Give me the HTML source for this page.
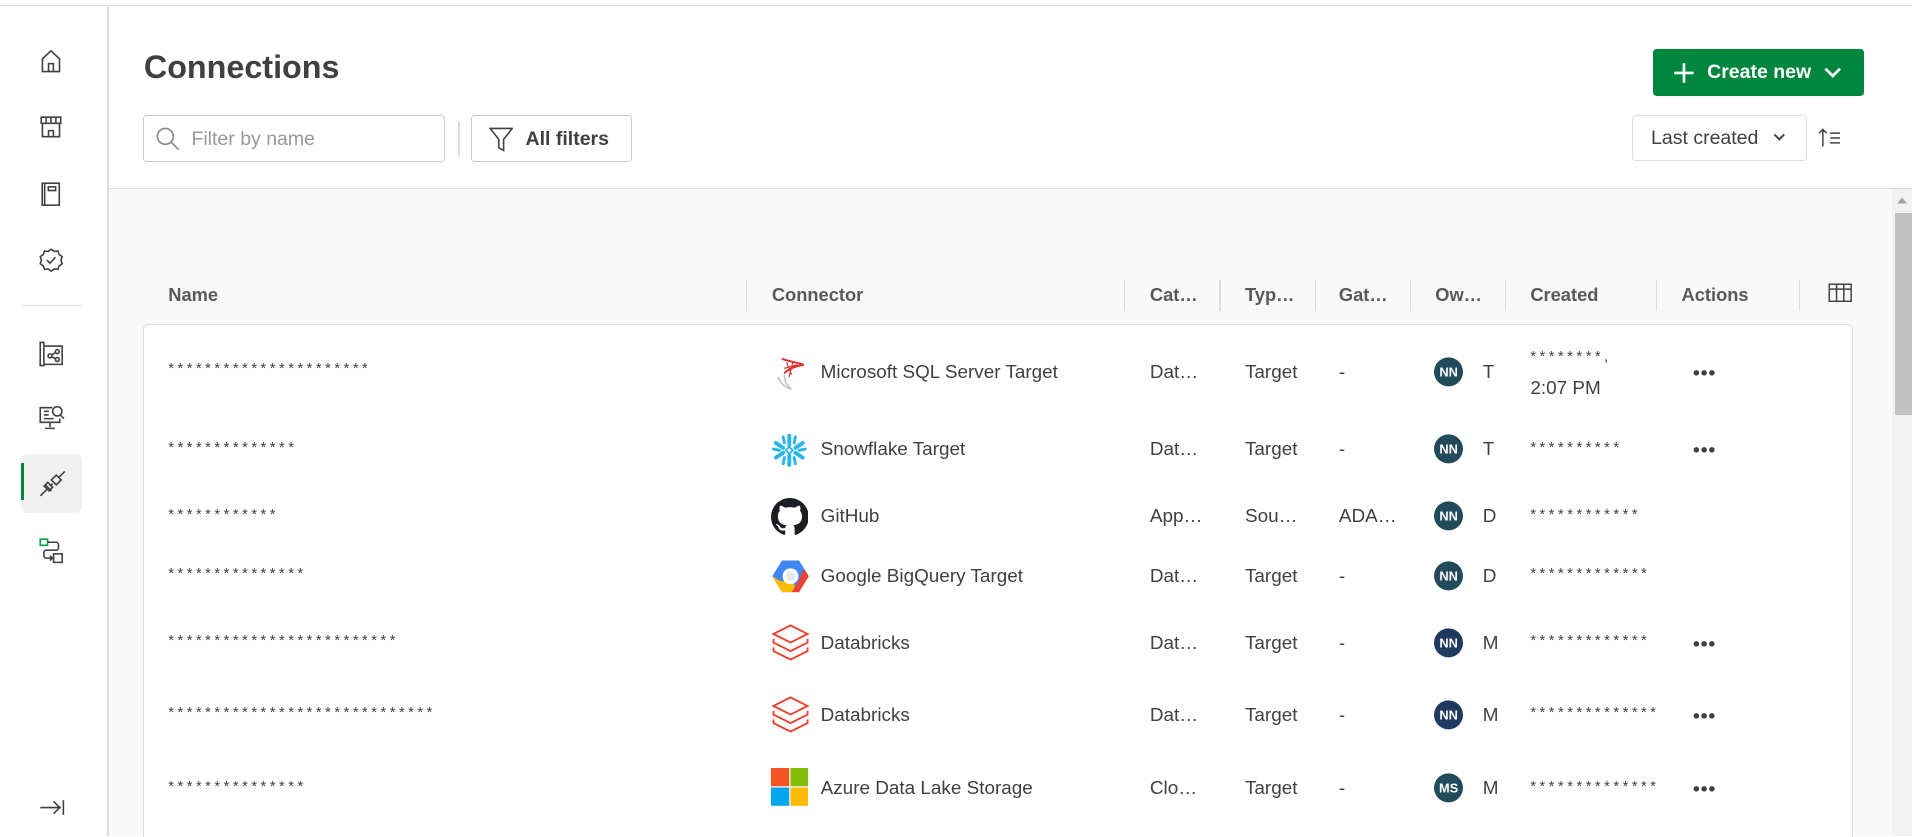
<!DOCTYPE html>
<html><head><meta charset="utf-8"><style>
*{box-sizing:border-box;margin:0;padding:0}
html,body{width:1912px;height:837px;overflow:hidden;background:#fff}
#w{position:relative;width:1568px;height:686px;zoom:1.21939;font-family:"Liberation Sans",sans-serif;color:#404040;overflow:hidden}
.a{position:absolute}
.t{position:absolute;font-size:15.5px;color:#404040;white-space:nowrap;transform:translateY(-50%)}
.h{position:absolute;top:242px;transform:translateY(-50%);font-size:15px;font-weight:bold;color:#595959;white-space:nowrap}
.sep{position:absolute;top:230px;width:1px;height:25px;background:#ddd}
.av{position:absolute;width:24px;height:24px;border-radius:50%;background:#234a5a;color:#fff;font-size:10.5px;font-weight:bold;text-align:center;line-height:24px;transform:translateY(-50%)}
.dots{position:absolute;transform:translateY(-50%);font-size:10.5px;font-weight:bold;color:#404040;letter-spacing:0px}
.st{font-size:12px;letter-spacing:2.9px}
svg.i{position:absolute}
</style></head><body><div id="w">
<div class="a" style="left:0;top:4px;width:1568px;height:1px;background:#ddd"></div>
<div class="a" style="left:88px;top:5px;width:1px;height:681px;background:#ddd"></div>
<svg class="i" style="left:33px;top:40px" width="18" height="20" viewBox="0 0 18 20" fill="none" stroke="#404040" stroke-width="1.3"><path d="M2 8L9 1.5 16 8V18.5H2Z"/><path d="M7 18.5V12h4v6.5"/></svg>
<svg class="i" style="left:33px;top:95px" width="18" height="18" viewBox="0 0 18 18" fill="none" stroke="#404040" stroke-width="1.3"><path d="M1 1h16v5H1z M5 1v5 M9 1v5 M13 1v5"/><path d="M2 6v11h14V6"/><path d="M7 17v-5h4v5"/></svg>
<svg class="i" style="left:34px;top:149px" width="16" height="20" viewBox="0 0 16 20" fill="none" stroke="#404040" stroke-width="1.3"><rect x="1" y="1" width="14" height="18"/><path d="M3 1v18"/><rect x="6" y="4" width="6" height="3"/></svg>
<svg class="i" style="left:32px;top:203px" width="20" height="20" viewBox="0 0 20 20" fill="none" stroke="#404040" stroke-width="1.3"><path d="M10 1l2.5 1.8 3-.3 1 2.8 2.5 1.8-1 2.9 1 2.9-2.5 1.8-1 2.8-3-.3L10 19l-2.5-1.8-3 .3-1-2.8L1 12.9l1-2.9-1-2.9 2.5-1.8 1-2.8 3 .3z"/><path d="M6.5 10l2.5 2.5 4.5-5"/></svg>
<div class="a" style="left:18px;top:250px;width:49px;height:1px;background:#ddd"></div>
<svg class="i" style="left:32px;top:279px" width="20" height="22" viewBox="0 0 20 22" fill="none" stroke="#404040" stroke-width="1.3"><path d="M1 2h3v19H1z"/><path d="M4 5h15v15H4"/><circle cx="9" cy="13" r="1.6"/><circle cx="15" cy="9.5" r="1.6"/><circle cx="15" cy="16" r="1.6"/><path d="M10.5 12.3l3-2 M10.5 13.8l3 1.5"/></svg>
<svg class="i" style="left:32px;top:331px" width="22" height="22" viewBox="0 0 22 22" fill="none" stroke="#404040" stroke-width="1.3"><path d="M11 3H1v12h16v-3"/><path d="M4 6h4 M4 9h4 M4 12h8"/><path d="M9 15v4 M5 20h8"/><circle cx="15" cy="6" r="3.8"/><path d="M17.5 9l3 3"/></svg>
<div class="a" style="left:17px;top:372px;width:50px;height:49px;background:#f0f0f0;border-radius:5px"></div>
<div class="a" style="left:17px;top:380px;width:3px;height:30px;background:#00873d"></div>
<svg class="i" style="left:31px;top:385px" width="24" height="24" viewBox="0 0 24 24" fill="none" stroke="#404040" stroke-width="1.3"><path d="M2 22l5-5 M22 2l-5 5"/><path d="M6 13l5 5 M5 14l3-3 4 4-3 3z"/><path d="M11 9l4-4 4 4-4 4z"/><path d="M10 14l2-2"/></svg>
<svg class="i" style="left:32px;top:441px" width="22" height="22" viewBox="0 0 22 22" fill="none" stroke="#404040" stroke-width="1.3"><rect x="1" y="1" width="6" height="5" stroke="#00a040"/><path d="M7 3.5h7a2 2 0 0 1 2 2V8a2 2 0 0 1-2 2H6a2 2 0 0 0-2 2v2.5a2 2 0 0 0 2 2h5 M9 14.5l2 2-2 2"/><rect x="12" y="13" width="7" height="7"/></svg>
<svg class="i" style="left:32px;top:655px" width="22" height="14" viewBox="0 0 22 14" fill="none" stroke="#404040" stroke-width="1.3"><path d="M1 7h17 M12 2l5 5-5 5 M20 1v12"/></svg>
<div class="a" style="left:118px;top:40px;font-size:26.5px;font-weight:bold;color:#404040">Connections</div>
<div class="a" style="left:117px;top:94px;width:248px;height:39px;border:1px solid #ccc;border-radius:3px"></div>
<svg class="i" style="left:127px;top:103px" width="22" height="22" viewBox="0 0 22 22" fill="none" stroke="#8a8a8a" stroke-width="1.4"><circle cx="8.5" cy="8.5" r="6.5"/><path d="M13.5 13.5l6 6"/></svg>
<div class="a" style="left:157px;top:105px;font-size:16px;color:#999">Filter by name</div>
<div class="a" style="left:376px;top:99px;width:1px;height:29px;background:#ddd"></div>
<div class="a" style="left:386px;top:94px;width:132px;height:39px;border:1px solid #ccc;border-radius:3px"></div>
<svg class="i" style="left:401px;top:103px" width="20" height="22" viewBox="0 0 20 22" fill="none" stroke="#404040" stroke-width="1.3"><path d="M1 2h18l-7 9v9l-4-2v-7z"/></svg>
<div class="a" style="left:431px;top:105px;font-size:16px;font-weight:bold;color:#404040">All filters</div>
<div class="a" style="left:1356px;top:40px;width:173px;height:39px;background:#00873d;border-radius:3px"></div>
<svg class="i" style="left:1372px;top:51px" width="18" height="18" viewBox="0 0 18 18" stroke="#fff" stroke-width="2.2"><path d="M9 1v16 M1 9h16"/></svg>
<div class="a" style="left:1400px;top:50px;font-size:16px;font-weight:bold;color:#fff">Create new</div>
<svg class="i" style="left:1495px;top:53px" width="16" height="12" viewBox="0 0 16 12" fill="none" stroke="#fff" stroke-width="2.2"><path d="M2 3l6 6 6-6"/></svg>
<div class="a" style="left:1338px;top:94px;width:144px;height:38px;border:1px solid #ddd;border-radius:3px"></div>
<div class="a" style="left:1354px;top:104px;font-size:16px;color:#404040">Last created</div>
<svg class="i" style="left:1453px;top:108px" width="12" height="10" viewBox="0 0 12 10" fill="none" stroke="#404040" stroke-width="1.6"><path d="M2 2l4 4 4-4"/></svg>
<svg class="i" style="left:1491px;top:104px" width="20" height="18" viewBox="0 0 20 18" fill="none" stroke="#404040" stroke-width="1.2"><path d="M4 16V2 M1 5l3-3 3 3 M10 5h8 M10 9h8 M10 13h8"/></svg>
<div class="a" style="left:89px;top:154px;width:1479px;height:1px;background:#ddd"></div>
<div class="a" style="left:89px;top:155px;width:1463px;height:531px;background:#f9f9f9"></div>
<div class="a" style="left:1552px;top:155px;width:16px;height:531px;background:#f1f1f1"></div>
<div class="a" style="left:1554px;top:175px;width:14px;height:165px;background:#c1c1c1"></div>
<svg class="i" style="left:1555px;top:160px" width="10" height="8" viewBox="0 0 10 8"><path d="M1 7l4-5 4 5z" fill="#a3a3a3"/></svg>
<div class="h" style="left:138px">Name</div><div class="sep" style="left:612px"></div>
<div class="h" style="left:633px">Connector</div><div class="sep" style="left:922px"></div>
<div class="h" style="left:943px">Cat…</div><div class="sep" style="left:1000px"></div>
<div class="h" style="left:1021px">Typ…</div><div class="sep" style="left:1078px"></div>
<div class="h" style="left:1098px">Gat…</div><div class="sep" style="left:1156px"></div>
<div class="h" style="left:1177px">Ow…</div><div class="sep" style="left:1234px"></div>
<div class="h" style="left:1255px">Created</div><div class="sep" style="left:1358px"></div>
<div class="h" style="left:1379px">Actions</div><div class="sep" style="left:1475px"></div>
<svg class="i" style="left:1499px;top:232px" width="20" height="16" viewBox="0 0 20 16" fill="none" stroke="#404040" stroke-width="1.2"><rect x="1" y="1" width="18" height="14"/><path d="M1 5h18 M7 1v14 M13 1v14"/></svg>
<div class="a" style="left:117px;top:266px;width:1403px;height:440px;background:#fff;border:1px solid #ddd;border-radius:4px"></div>

<div class="t st" style="left:138px;top:303px">**********************</div>
<svg class="i" style="left:633px;top:291px" width="30" height="30" viewBox="0 0 30 30" fill="none"><path d="M8 3c5 2 12 3 18 5-6 1-12 3-16 7" stroke="#d9302c" stroke-width="1.6"/><path d="M12 6l4 10 M17 6l-3 12 M10 11l11-3" stroke="#d9302c" stroke-width="1"/><path d="M5 18c2 5 6 9 11 10-4-3-6-7-6-12" stroke="#b8bdc5" stroke-width="1.2"/></svg>
<div class="t" style="left:673px;top:306px">Microsoft SQL Server Target</div>
<div class="t" style="left:943px;top:306px">Dat…</div><div class="t" style="left:1021px;top:306px">Target</div><div class="t" style="left:1098px;top:306px">-</div>
<div class="av" style="left:1176px;top:305px">NN</div><div class="t" style="left:1216px;top:306px">T</div>
<div class="t st" style="left:1255px;top:293px">********,</div><div class="t" style="left:1255px;top:319px">2:07 PM</div>
<div class="dots" style="left:1388px;top:305px">●●●</div>

<div class="t st" style="left:138px;top:367px">**************</div>
<svg class="i" style="left:632px;top:354px" width="30" height="30" viewBox="0 0 30 30" fill="none" stroke="#29b5e8" stroke-width="3.2" stroke-linecap="round"><path d="M15 3v8 M15 19v8 M4 9l6 4 M26 9l-6 4 M4 21l6-4 M26 21l-6-4"/><path d="M10 4l1 5 M20 4l-1 5 M10 26l1-5 M20 26l-1-5 M2 14l5 1 M28 14l-5 1" stroke-width="2.4"/><rect x="13" y="13" width="4" height="4" stroke-width="1.5" transform="rotate(45 15 15)"/></svg>
<div class="t" style="left:673px;top:369px">Snowflake Target</div>
<div class="t" style="left:943px;top:369px">Dat…</div><div class="t" style="left:1021px;top:369px">Target</div><div class="t" style="left:1098px;top:369px">-</div>
<div class="av" style="left:1176px;top:368px">NN</div><div class="t" style="left:1216px;top:369px">T</div>
<div class="t st" style="left:1255px;top:367px">**********</div>
<div class="dots" style="left:1388px;top:368px">●●●</div>

<div class="t st" style="left:138px;top:422px">************</div>
<svg class="i" style="left:632px;top:408px" width="31" height="31" viewBox="0 0 16 16"><path fill="#1b1f23" d="M8 0C3.58 0 0 3.58 0 8c0 3.54 2.29 6.53 5.47 7.59.4.07.55-.17.55-.38 0-.19-.01-.82-.01-1.49-2.01.37-2.53-.49-2.69-.94-.09-.23-.48-.94-.82-1.13-.28-.15-.68-.52-.01-.53.63-.01 1.08.58 1.23.82.72 1.21 1.87.87 2.33.66.07-.52.28-.87.51-1.07-1.78-.2-3.64-.89-3.64-3.95 0-.87.31-1.59.82-2.15-.08-.2-.36-1.02.08-2.12 0 0 .67-.21 2.2.82.64-.18 1.32-.27 2-.27.68 0 1.36.09 2 .27 1.53-1.04 2.2-.82 2.2-.82.44 1.1.16 1.92.08 2.12.51.56.82 1.27.82 2.15 0 3.07-1.87 3.75-3.65 3.95.29.25.54.73.54 1.48 0 1.07-.01 1.93-.01 2.2 0 .21.15.46.55.38A8.013 8.013 0 0 0 16 8c0-4.42-3.58-8-8-8z"/></svg>
<div class="t" style="left:673px;top:424px">GitHub</div>
<div class="t" style="left:943px;top:424px">App…</div><div class="t" style="left:1021px;top:424px">Sou…</div><div class="t" style="left:1098px;top:424px">ADA…</div>
<div class="av" style="left:1176px;top:423px">NN</div><div class="t" style="left:1216px;top:424px">D</div>
<div class="t st" style="left:1255px;top:422px">************</div>

<div class="t st" style="left:138px;top:471px">***************</div>
<svg class="i" style="left:632px;top:458px" width="32" height="30" viewBox="0 0 32 30"><path d="M9 2h14l8 13-8 13H9L1 15z" fill="#4285f4"/><path d="M1 15l8 13h14l-6-9H8z" fill="#fbbc05"/><path d="M31 15l-8 13h-6l6-10 4-9z" fill="#ea4335"/><circle cx="16" cy="15" r="6.5" fill="#fff"/><circle cx="16" cy="15" r="4" fill="#e8e8e8"/></svg>
<div class="t" style="left:673px;top:473px">Google BigQuery Target</div>
<div class="t" style="left:943px;top:473px">Dat…</div><div class="t" style="left:1021px;top:473px">Target</div><div class="t" style="left:1098px;top:473px">-</div>
<div class="av" style="left:1176px;top:472px">NN</div><div class="t" style="left:1216px;top:473px">D</div>
<div class="t st" style="left:1255px;top:471px">*************</div>

<svg class="i" style="left:632px;top:511px" width="32" height="34" viewBox="0 0 32 34" fill="none" stroke="#ee3d2c" stroke-width="1.5"><path d="M2 9L16 2l14 7-14 7z"/><path d="M2 13v3l14 7 14-7v-3"/><path d="M2 20v3l14 7 14-7v-3"/></svg>
<div class="t st" style="left:138px;top:526px">*************************</div>
<div class="t" style="left:673px;top:528px">Databricks</div>
<div class="t" style="left:943px;top:528px">Dat…</div><div class="t" style="left:1021px;top:528px">Target</div><div class="t" style="left:1098px;top:528px">-</div>
<div class="av" style="left:1176px;top:527px;background:#1f3a5f">NN</div><div class="t" style="left:1216px;top:528px">M</div>
<div class="t st" style="left:1255px;top:526px">*************</div>
<div class="dots" style="left:1388px;top:527px">●●●</div>

<svg class="i" style="left:632px;top:570px" width="32" height="34" viewBox="0 0 32 34" fill="none" stroke="#ee3d2c" stroke-width="1.5"><path d="M2 9L16 2l14 7-14 7z"/><path d="M2 13v3l14 7 14-7v-3"/><path d="M2 20v3l14 7 14-7v-3"/></svg>
<div class="t st" style="left:138px;top:585px">*****************************</div>
<div class="t" style="left:673px;top:587px">Databricks</div>
<div class="t" style="left:943px;top:587px">Dat…</div><div class="t" style="left:1021px;top:587px">Target</div><div class="t" style="left:1098px;top:587px">-</div>
<div class="av" style="left:1176px;top:586px;background:#1f3a5f">NN</div><div class="t" style="left:1216px;top:587px">M</div>
<div class="t st" style="left:1255px;top:585px">**************</div>
<div class="dots" style="left:1388px;top:586px">●●●</div>

<svg class="i" style="left:632px;top:630px" width="31" height="31" viewBox="0 0 31 31"><rect x="0" y="0" width="15" height="15" fill="#f35325"/><rect x="16" y="0" width="15" height="15" fill="#81bc06"/><rect x="0" y="16" width="15" height="15" fill="#05a6f0"/><rect x="16" y="16" width="15" height="15" fill="#ffba08"/></svg>
<div class="t st" style="left:138px;top:645px">***************</div>
<div class="t" style="left:673px;top:647px">Azure Data Lake Storage</div>
<div class="t" style="left:943px;top:647px">Clo…</div><div class="t" style="left:1021px;top:647px">Target</div><div class="t" style="left:1098px;top:647px">-</div>
<div class="av" style="left:1176px;top:646px">MS</div><div class="t" style="left:1216px;top:647px">M</div>
<div class="t st" style="left:1255px;top:645px">**************</div>
<div class="dots" style="left:1388px;top:646px">●●●</div>
</div></body></html>
